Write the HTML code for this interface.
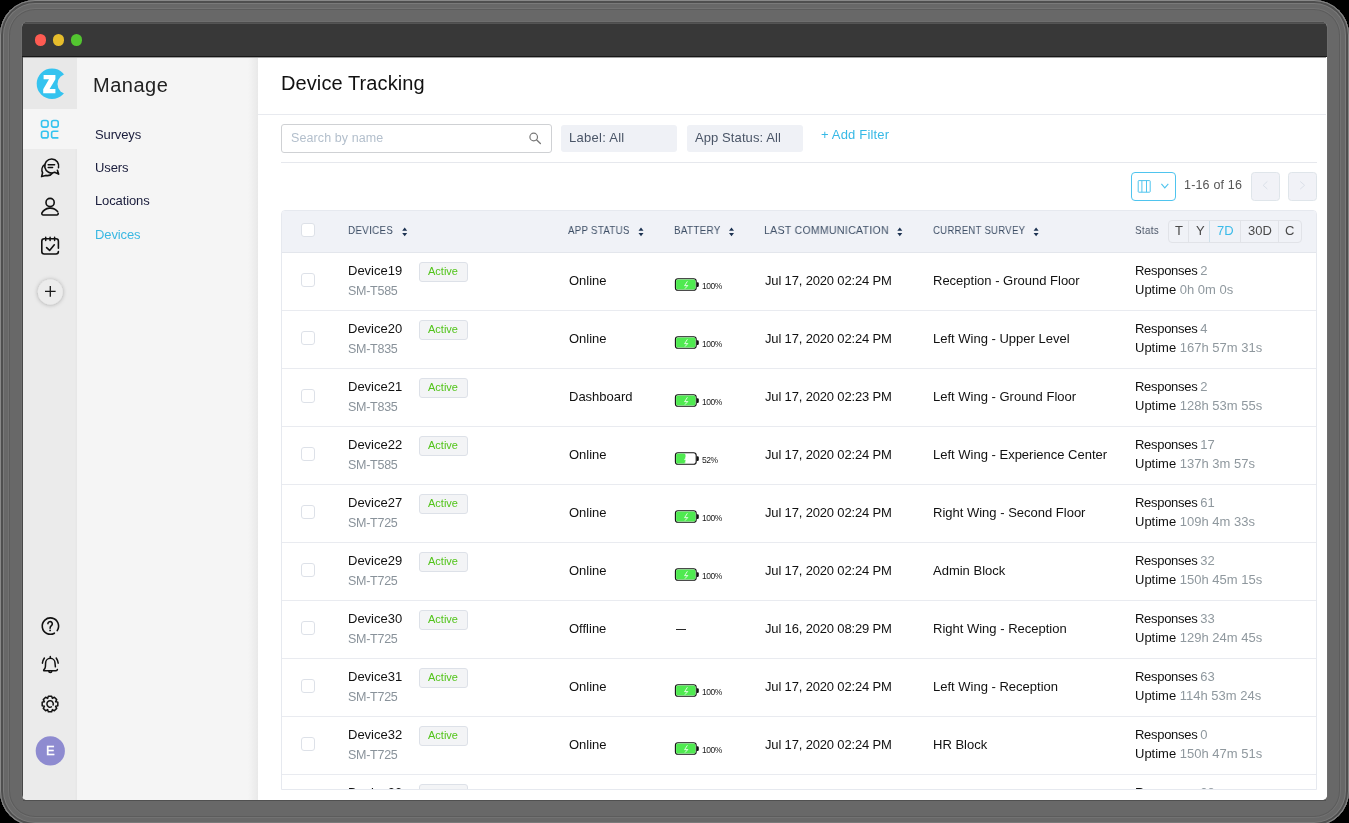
<!DOCTYPE html>
<html><head><meta charset="utf-8"><style>
*{box-sizing:border-box;margin:0;padding:0}
html,body{width:1349px;height:823px;overflow:hidden;background:#000;font-family:"Liberation Sans",sans-serif}
#frame{position:absolute;left:0;top:0;width:1349px;height:826px;background:#686868;border-radius:35px;box-shadow:inset 0 0 0 1px #888,inset 0 0 0 3px #4f4f4f,inset 0 0 0 4px #7a7a7a,inset 0 0 0 8px #686868,inset 0 0 0 9px #727272,inset 0 0 0 10px #5c5c5c}
#win{position:absolute;left:22px;top:22px;width:1305px;height:778px;border-radius:5px;overflow:hidden;background:#fff;box-shadow:0 0 0 1px #6e6e6e}
#title{position:absolute;left:0;top:0;width:1305px;height:35px;background:#383838;border-top:1px solid #4d4d4d;border-bottom:1px solid #171717;box-shadow:inset 0 1px 0 #545454}
.dot{position:absolute;top:11.45px;width:11.5px;height:11.5px;border-radius:50%}
#rail{position:absolute;left:0;top:35px;width:55px;height:743px;background:#ebebeb;border-left:1px solid #474747}
#side{position:absolute;left:55px;top:35px;width:181px;height:743px;background:#f5f5f5}
#main{position:absolute;left:236px;top:35px;width:1069px;height:743px;background:#fff}
.t{position:absolute;white-space:nowrap;line-height:1;will-change:transform}
.a{position:absolute}
svg{position:absolute;left:0;top:0;overflow:visible}
#clip{position:absolute;left:0;top:0;width:1349px;height:789px;overflow:hidden}
</style></head><body>
<div id="frame"></div>
<div id="win">
<div id="title">
<div class="dot" style="left:12.6px;background:#fe5b52"></div>
<div class="dot" style="left:30.6px;background:#e6bd2c"></div>
<div class="dot" style="left:48.6px;background:#53c530"></div>
</div>
<div id="rail"></div><div id="side"></div><div id="main"></div>
</div>
<div class="a" style="left:23px;top:57px;width:1303px;height:1px;background:#a0a0a0"></div>
<div class="a" style="left:23px;top:800px;width:1303px;height:1px;background:#505050"></div>
<div class="a" style="left:23px;top:58px;width:54px;height:51px;background:#e8e8e8"></div>
<div class="a" style="left:23px;top:109px;width:54px;height:40px;background:#f5f5f5"></div>
<div class="a" style="left:75px;top:149px;width:2px;height:651px;background:linear-gradient(to right,#eaeaea,#e6e6e6)"></div>
<div class="a" style="left:248px;top:58px;width:10px;height:742px;background:linear-gradient(to right,rgba(0,0,0,0),rgba(0,0,0,0.05))"></div>
<div class="t" style="left:92.9px;top:75.47px;font-size:20px;color:#222;letter-spacing:0.5px">Manage</div>
<div class="t" style="left:95.4px;top:127.70px;font-size:13px;color:#1a1d3c;letter-spacing:-0.12px">Surveys</div>
<div class="t" style="left:95.4px;top:161.00px;font-size:13px;color:#1a1d3c;letter-spacing:-0.12px">Users</div>
<div class="t" style="left:95.4px;top:194.40px;font-size:13px;color:#1a1d3c;letter-spacing:-0.12px">Locations</div>
<div class="t" style="left:95.4px;top:227.80px;font-size:13px;color:#3bb8e2;letter-spacing:-0.12px">Devices</div>
<div class="t" style="left:281px;top:73.47px;font-size:20px;color:#111;letter-spacing:0.1px">Device Tracking</div>
<div class="a" style="left:258px;top:114px;width:1068px;height:1px;background:#e8eaef"></div>
<div class="a" style="left:281px;top:124px;width:271px;height:29px;border:1px solid #cfd1d4;border-radius:3px;background:#fff"></div>
<div class="t" style="left:291.4px;top:131.82px;font-size:12.5px;color:#b3bfcc;letter-spacing:0.1px">Search by name</div>
<div class="a" style="left:561px;top:125px;width:116px;height:27px;border-radius:3px;background:#eff1f6"></div>
<div class="t" style="left:568.6px;top:131.20px;font-size:13px;color:#4a5567;letter-spacing:0.27px">Label: All</div>
<div class="a" style="left:687px;top:125px;width:116px;height:27px;border-radius:3px;background:#eff1f6"></div>
<div class="t" style="left:695px;top:131.20px;font-size:13px;color:#4a5567;letter-spacing:0.09px">App Status: All</div>
<div class="t" style="left:821px;top:127.90px;font-size:13px;color:#37b9e6;letter-spacing:0.18px">+ Add Filter</div>
<div class="a" style="left:281px;top:162px;width:1036px;height:1px;background:#e6e8ed"></div>
<div class="a" style="left:1130.5px;top:172px;width:45.5px;height:29px;border:1px solid #4fc4ee;border-radius:4px"></div>
<div class="t" style="left:1184.2px;top:178.72px;font-size:12.5px;color:#555;letter-spacing:0.18px">1-16 of 16</div>
<div class="a" style="left:1251px;top:172px;width:29px;height:29px;border:1px solid #dfe5ea;border-radius:3.5px;background:#f1f2f7"></div>
<div class="a" style="left:1288px;top:172px;width:29px;height:29px;border:1px solid #dfe5ea;border-radius:3.5px;background:#f1f2f7"></div>
<div class="a" style="left:281px;top:210px;width:1036px;height:580px;border:1px solid #e6e9ef;border-radius:4px 4px 0 0;overflow:hidden;background:#fff">
<div class="a" style="left:0;top:0;width:1036px;height:42px;background:#f0f2f7;border-bottom:1px solid #e3e6ec"></div>
</div>
<div class="a" style="left:301px;top:222.5px;width:14px;height:14px;border:1px solid #dde1e8;border-radius:3px;background:#fff"></div>
<div class="t" style="left:348.154px;top:224.38px;font-size:11.6px;color:#3e4f66;letter-spacing:0.35px;transform:scaleX(0.846);transform-origin:0 0">DEVICES</div>
<div class="t" style="left:567.764px;top:224.38px;font-size:11.6px;color:#3e4f66;letter-spacing:0.35px;transform:scaleX(0.836);transform-origin:0 0">APP STATUS</div>
<div class="t" style="left:673.949px;top:224.38px;font-size:11.6px;color:#3e4f66;letter-spacing:0.35px;transform:scaleX(0.851);transform-origin:0 0">BATTERY</div>
<div class="t" style="left:764.494px;top:224.38px;font-size:11.6px;color:#3e4f66;letter-spacing:0.35px;transform:scaleX(0.906);transform-origin:0 0">LAST COMMUNICATION</div>
<div class="t" style="left:932.977px;top:224.38px;font-size:11.6px;color:#3e4f66;letter-spacing:0.35px;transform:scaleX(0.823);transform-origin:0 0">CURRENT SURVEY</div>
<div class="t" style="left:1135.3px;top:224.38px;font-size:11.6px;color:#4a5567;letter-spacing:0.35px;transform:scaleX(0.852);transform-origin:0 0">Stats</div>
<div class="a" style="left:1167.5px;top:220px;width:134px;height:23px;border:1px solid #e1e3e8;border-radius:4px;background:#f0f2f7"></div>
<div class="a" style="left:1188.2px;top:221px;width:1px;height:21px;background:#e1e3e8"></div>
<div class="a" style="left:1209.0px;top:221px;width:1px;height:21px;background:#cfe0ea"></div>
<div class="a" style="left:1240.1px;top:221px;width:1px;height:21px;background:#e1e3e8"></div>
<div class="a" style="left:1277.9px;top:221px;width:1px;height:21px;background:#e1e3e8"></div>
<div class="t" style="left:1175px;top:223.60px;font-size:13px;color:#4a4a4a;">T</div>
<div class="t" style="left:1196.1px;top:223.60px;font-size:13px;color:#4a4a4a;">Y</div>
<div class="t" style="left:1217.3px;top:223.60px;font-size:13px;color:#3bbbe9;">7D</div>
<div class="t" style="left:1247.8px;top:223.60px;font-size:13px;color:#4a4a4a;">30D</div>
<div class="t" style="left:1285.1px;top:223.60px;font-size:13px;color:#4a4a4a;">C</div>
<div id="clip">
<div class="a" style="left:282px;top:310px;width:1034px;height:1px;background:#e9ebf0"></div>
<div class="a" style="left:301px;top:273.2px;width:14px;height:14px;border:1px solid #dde1e8;border-radius:3px;background:#fff"></div>
<div class="t" style="left:348.3px;top:264.00px;font-size:13px;color:#111;">Device19</div>
<div class="t" style="left:348.3px;top:284.82px;font-size:12.5px;color:#89929a;letter-spacing:-0.27px">SM-T585</div>
<div class="a" style="left:419px;top:262.4px;width:49px;height:20px;border:1px solid #dde1e8;border-radius:3px;background:#f3f4f6"></div>
<div class="t" style="left:428.3px;top:265.69px;font-size:11px;color:#52c41a;">Active</div>
<div class="t" style="left:569px;top:274.00px;font-size:13px;color:#111;">Online</div>
<div class="t" style="left:701.9px;top:282.00px;font-size:8.5px;color:#222;letter-spacing:-0.45px">100%</div>
<div class="t" style="left:765.3px;top:274.00px;font-size:13px;color:#111;letter-spacing:-0.16px">Jul 17, 2020 02:24 PM</div>
<div class="t" style="left:932.9px;top:274.00px;font-size:13px;color:#111;">Reception - Ground Floor</div>
<div class="t" style="left:1134.6px;top:264.00px;font-size:13px;color:#111;"><span style="letter-spacing:-0.3px">Responses</span> <span style="color:#8f989e;margin-left:-0.8px">2</span></div>
<div class="t" style="left:1134.6px;top:282.80px;font-size:13px;color:#111;">Uptime <span style="color:#8f989e">0h 0m 0s</span></div>
<div class="a" style="left:282px;top:368px;width:1034px;height:1px;background:#e9ebf0"></div>
<div class="a" style="left:301px;top:331.2px;width:14px;height:14px;border:1px solid #dde1e8;border-radius:3px;background:#fff"></div>
<div class="t" style="left:348.3px;top:322.00px;font-size:13px;color:#111;">Device20</div>
<div class="t" style="left:348.3px;top:342.82px;font-size:12.5px;color:#89929a;letter-spacing:-0.27px">SM-T835</div>
<div class="a" style="left:419px;top:320.4px;width:49px;height:20px;border:1px solid #dde1e8;border-radius:3px;background:#f3f4f6"></div>
<div class="t" style="left:428.3px;top:323.69px;font-size:11px;color:#52c41a;">Active</div>
<div class="t" style="left:569px;top:332.00px;font-size:13px;color:#111;">Online</div>
<div class="t" style="left:701.9px;top:340.00px;font-size:8.5px;color:#222;letter-spacing:-0.45px">100%</div>
<div class="t" style="left:765.3px;top:332.00px;font-size:13px;color:#111;letter-spacing:-0.16px">Jul 17, 2020 02:24 PM</div>
<div class="t" style="left:932.9px;top:332.00px;font-size:13px;color:#111;">Left Wing - Upper Level</div>
<div class="t" style="left:1134.6px;top:322.00px;font-size:13px;color:#111;"><span style="letter-spacing:-0.3px">Responses</span> <span style="color:#8f989e;margin-left:-0.8px">4</span></div>
<div class="t" style="left:1134.6px;top:340.80px;font-size:13px;color:#111;">Uptime <span style="color:#8f989e">167h 57m 31s</span></div>
<div class="a" style="left:282px;top:426px;width:1034px;height:1px;background:#e9ebf0"></div>
<div class="a" style="left:301px;top:389.2px;width:14px;height:14px;border:1px solid #dde1e8;border-radius:3px;background:#fff"></div>
<div class="t" style="left:348.3px;top:380.00px;font-size:13px;color:#111;">Device21</div>
<div class="t" style="left:348.3px;top:400.82px;font-size:12.5px;color:#89929a;letter-spacing:-0.27px">SM-T835</div>
<div class="a" style="left:419px;top:378.4px;width:49px;height:20px;border:1px solid #dde1e8;border-radius:3px;background:#f3f4f6"></div>
<div class="t" style="left:428.3px;top:381.69px;font-size:11px;color:#52c41a;">Active</div>
<div class="t" style="left:569px;top:390.00px;font-size:13px;color:#111;">Dashboard</div>
<div class="t" style="left:701.9px;top:398.00px;font-size:8.5px;color:#222;letter-spacing:-0.45px">100%</div>
<div class="t" style="left:765.3px;top:390.00px;font-size:13px;color:#111;letter-spacing:-0.16px">Jul 17, 2020 02:23 PM</div>
<div class="t" style="left:932.9px;top:390.00px;font-size:13px;color:#111;">Left Wing - Ground Floor</div>
<div class="t" style="left:1134.6px;top:380.00px;font-size:13px;color:#111;"><span style="letter-spacing:-0.3px">Responses</span> <span style="color:#8f989e;margin-left:-0.8px">2</span></div>
<div class="t" style="left:1134.6px;top:398.80px;font-size:13px;color:#111;">Uptime <span style="color:#8f989e">128h 53m 55s</span></div>
<div class="a" style="left:282px;top:484px;width:1034px;height:1px;background:#e9ebf0"></div>
<div class="a" style="left:301px;top:447.2px;width:14px;height:14px;border:1px solid #dde1e8;border-radius:3px;background:#fff"></div>
<div class="t" style="left:348.3px;top:438.00px;font-size:13px;color:#111;">Device22</div>
<div class="t" style="left:348.3px;top:458.82px;font-size:12.5px;color:#89929a;letter-spacing:-0.27px">SM-T585</div>
<div class="a" style="left:419px;top:436.4px;width:49px;height:20px;border:1px solid #dde1e8;border-radius:3px;background:#f3f4f6"></div>
<div class="t" style="left:428.3px;top:439.69px;font-size:11px;color:#52c41a;">Active</div>
<div class="t" style="left:569px;top:448.00px;font-size:13px;color:#111;">Online</div>
<div class="t" style="left:701.9px;top:456.00px;font-size:8.5px;color:#222;letter-spacing:-0.45px">52%</div>
<div class="t" style="left:765.3px;top:448.00px;font-size:13px;color:#111;letter-spacing:-0.16px">Jul 17, 2020 02:24 PM</div>
<div class="t" style="left:932.9px;top:448.00px;font-size:13px;color:#111;">Left Wing - Experience Center</div>
<div class="t" style="left:1134.6px;top:438.00px;font-size:13px;color:#111;"><span style="letter-spacing:-0.3px">Responses</span> <span style="color:#8f989e;margin-left:-0.8px">17</span></div>
<div class="t" style="left:1134.6px;top:456.80px;font-size:13px;color:#111;">Uptime <span style="color:#8f989e">137h 3m 57s</span></div>
<div class="a" style="left:282px;top:542px;width:1034px;height:1px;background:#e9ebf0"></div>
<div class="a" style="left:301px;top:505.2px;width:14px;height:14px;border:1px solid #dde1e8;border-radius:3px;background:#fff"></div>
<div class="t" style="left:348.3px;top:496.00px;font-size:13px;color:#111;">Device27</div>
<div class="t" style="left:348.3px;top:516.82px;font-size:12.5px;color:#89929a;letter-spacing:-0.27px">SM-T725</div>
<div class="a" style="left:419px;top:494.4px;width:49px;height:20px;border:1px solid #dde1e8;border-radius:3px;background:#f3f4f6"></div>
<div class="t" style="left:428.3px;top:497.69px;font-size:11px;color:#52c41a;">Active</div>
<div class="t" style="left:569px;top:506.00px;font-size:13px;color:#111;">Online</div>
<div class="t" style="left:701.9px;top:514.00px;font-size:8.5px;color:#222;letter-spacing:-0.45px">100%</div>
<div class="t" style="left:765.3px;top:506.00px;font-size:13px;color:#111;letter-spacing:-0.16px">Jul 17, 2020 02:24 PM</div>
<div class="t" style="left:932.9px;top:506.00px;font-size:13px;color:#111;">Right Wing - Second Floor</div>
<div class="t" style="left:1134.6px;top:496.00px;font-size:13px;color:#111;"><span style="letter-spacing:-0.3px">Responses</span> <span style="color:#8f989e;margin-left:-0.8px">61</span></div>
<div class="t" style="left:1134.6px;top:514.80px;font-size:13px;color:#111;">Uptime <span style="color:#8f989e">109h 4m 33s</span></div>
<div class="a" style="left:282px;top:600px;width:1034px;height:1px;background:#e9ebf0"></div>
<div class="a" style="left:301px;top:563.2px;width:14px;height:14px;border:1px solid #dde1e8;border-radius:3px;background:#fff"></div>
<div class="t" style="left:348.3px;top:554.00px;font-size:13px;color:#111;">Device29</div>
<div class="t" style="left:348.3px;top:574.82px;font-size:12.5px;color:#89929a;letter-spacing:-0.27px">SM-T725</div>
<div class="a" style="left:419px;top:552.4px;width:49px;height:20px;border:1px solid #dde1e8;border-radius:3px;background:#f3f4f6"></div>
<div class="t" style="left:428.3px;top:555.69px;font-size:11px;color:#52c41a;">Active</div>
<div class="t" style="left:569px;top:564.00px;font-size:13px;color:#111;">Online</div>
<div class="t" style="left:701.9px;top:572.00px;font-size:8.5px;color:#222;letter-spacing:-0.45px">100%</div>
<div class="t" style="left:765.3px;top:564.00px;font-size:13px;color:#111;letter-spacing:-0.16px">Jul 17, 2020 02:24 PM</div>
<div class="t" style="left:932.9px;top:564.00px;font-size:13px;color:#111;">Admin Block</div>
<div class="t" style="left:1134.6px;top:554.00px;font-size:13px;color:#111;"><span style="letter-spacing:-0.3px">Responses</span> <span style="color:#8f989e;margin-left:-0.8px">32</span></div>
<div class="t" style="left:1134.6px;top:572.80px;font-size:13px;color:#111;">Uptime <span style="color:#8f989e">150h 45m 15s</span></div>
<div class="a" style="left:282px;top:658px;width:1034px;height:1px;background:#e9ebf0"></div>
<div class="a" style="left:301px;top:621.2px;width:14px;height:14px;border:1px solid #dde1e8;border-radius:3px;background:#fff"></div>
<div class="t" style="left:348.3px;top:612.00px;font-size:13px;color:#111;">Device30</div>
<div class="t" style="left:348.3px;top:632.82px;font-size:12.5px;color:#89929a;letter-spacing:-0.27px">SM-T725</div>
<div class="a" style="left:419px;top:610.4px;width:49px;height:20px;border:1px solid #dde1e8;border-radius:3px;background:#f3f4f6"></div>
<div class="t" style="left:428.3px;top:613.69px;font-size:11px;color:#52c41a;">Active</div>
<div class="t" style="left:569px;top:622.00px;font-size:13px;color:#111;">Offline</div>
<div class="a" style="left:676.4px;top:628.6px;width:9.4px;height:1.1px;background:#2a2a2a"></div>
<div class="t" style="left:765.3px;top:622.00px;font-size:13px;color:#111;letter-spacing:-0.16px">Jul 16, 2020 08:29 PM</div>
<div class="t" style="left:932.9px;top:622.00px;font-size:13px;color:#111;">Right Wing - Reception</div>
<div class="t" style="left:1134.6px;top:612.00px;font-size:13px;color:#111;"><span style="letter-spacing:-0.3px">Responses</span> <span style="color:#8f989e;margin-left:-0.8px">33</span></div>
<div class="t" style="left:1134.6px;top:630.80px;font-size:13px;color:#111;">Uptime <span style="color:#8f989e">129h 24m 45s</span></div>
<div class="a" style="left:282px;top:716px;width:1034px;height:1px;background:#e9ebf0"></div>
<div class="a" style="left:301px;top:679.2px;width:14px;height:14px;border:1px solid #dde1e8;border-radius:3px;background:#fff"></div>
<div class="t" style="left:348.3px;top:670.00px;font-size:13px;color:#111;">Device31</div>
<div class="t" style="left:348.3px;top:690.82px;font-size:12.5px;color:#89929a;letter-spacing:-0.27px">SM-T725</div>
<div class="a" style="left:419px;top:668.4px;width:49px;height:20px;border:1px solid #dde1e8;border-radius:3px;background:#f3f4f6"></div>
<div class="t" style="left:428.3px;top:671.69px;font-size:11px;color:#52c41a;">Active</div>
<div class="t" style="left:569px;top:680.00px;font-size:13px;color:#111;">Online</div>
<div class="t" style="left:701.9px;top:688.00px;font-size:8.5px;color:#222;letter-spacing:-0.45px">100%</div>
<div class="t" style="left:765.3px;top:680.00px;font-size:13px;color:#111;letter-spacing:-0.16px">Jul 17, 2020 02:24 PM</div>
<div class="t" style="left:932.9px;top:680.00px;font-size:13px;color:#111;">Left Wing - Reception</div>
<div class="t" style="left:1134.6px;top:670.00px;font-size:13px;color:#111;"><span style="letter-spacing:-0.3px">Responses</span> <span style="color:#8f989e;margin-left:-0.8px">63</span></div>
<div class="t" style="left:1134.6px;top:688.80px;font-size:13px;color:#111;">Uptime <span style="color:#8f989e">114h 53m 24s</span></div>
<div class="a" style="left:282px;top:774px;width:1034px;height:1px;background:#e9ebf0"></div>
<div class="a" style="left:301px;top:737.2px;width:14px;height:14px;border:1px solid #dde1e8;border-radius:3px;background:#fff"></div>
<div class="t" style="left:348.3px;top:728.00px;font-size:13px;color:#111;">Device32</div>
<div class="t" style="left:348.3px;top:748.82px;font-size:12.5px;color:#89929a;letter-spacing:-0.27px">SM-T725</div>
<div class="a" style="left:419px;top:726.4px;width:49px;height:20px;border:1px solid #dde1e8;border-radius:3px;background:#f3f4f6"></div>
<div class="t" style="left:428.3px;top:729.69px;font-size:11px;color:#52c41a;">Active</div>
<div class="t" style="left:569px;top:738.00px;font-size:13px;color:#111;">Online</div>
<div class="t" style="left:701.9px;top:746.00px;font-size:8.5px;color:#222;letter-spacing:-0.45px">100%</div>
<div class="t" style="left:765.3px;top:738.00px;font-size:13px;color:#111;letter-spacing:-0.16px">Jul 17, 2020 02:24 PM</div>
<div class="t" style="left:932.9px;top:738.00px;font-size:13px;color:#111;">HR Block</div>
<div class="t" style="left:1134.6px;top:728.00px;font-size:13px;color:#111;"><span style="letter-spacing:-0.3px">Responses</span> <span style="color:#8f989e;margin-left:-0.8px">0</span></div>
<div class="t" style="left:1134.6px;top:746.80px;font-size:13px;color:#111;">Uptime <span style="color:#8f989e">150h 47m 51s</span></div>
<div class="a" style="left:282px;top:832px;width:1034px;height:1px;background:#e9ebf0"></div>
<div class="a" style="left:301px;top:795.2px;width:14px;height:14px;border:1px solid #dde1e8;border-radius:3px;background:#fff"></div>
<div class="t" style="left:348.3px;top:786.00px;font-size:13px;color:#111;">Device33</div>
<div class="t" style="left:348.3px;top:806.82px;font-size:12.5px;color:#89929a;letter-spacing:-0.27px">SM-T725</div>
<div class="a" style="left:419px;top:784.4px;width:49px;height:20px;border:1px solid #dde1e8;border-radius:3px;background:#f3f4f6"></div>
<div class="t" style="left:428.3px;top:787.69px;font-size:11px;color:#52c41a;">Active</div>
<div class="t" style="left:569px;top:796.00px;font-size:13px;color:#111;">Online</div>
<div class="t" style="left:701.9px;top:804.00px;font-size:8.5px;color:#222;letter-spacing:-0.45px">100%</div>
<div class="t" style="left:765.3px;top:796.00px;font-size:13px;color:#111;letter-spacing:-0.16px">Jul 17, 2020 02:24 PM</div>
<div class="t" style="left:932.9px;top:796.00px;font-size:13px;color:#111;">Left Wing - Reception</div>
<div class="t" style="left:1134.6px;top:786.00px;font-size:13px;color:#111;"><span style="letter-spacing:-0.3px">Responses</span> <span style="color:#8f989e;margin-left:-0.8px">28</span></div>
<div class="t" style="left:1134.6px;top:804.80px;font-size:13px;color:#111;">Uptime <span style="color:#8f989e">150h 47m 51s</span></div>
<svg width="1349" height="823"><rect x="675.4" y="278.8" width="20.8" height="11.5" rx="2.6" fill="#fff" stroke="#111" stroke-width="1.1"/><rect x="676.1" y="279.5" width="19.40" height="10.1" rx="1.6" fill="#4fea50"/><path d="M696.6,282.2 h0.9 a1.3,1.3 0 0 1 1.3,1.3 v2.3 a1.3,1.3 0 0 1 -1.3,1.3 h-0.9z" fill="#111"/><path d="M687.4,281.3 L684.6,285.7 L687.8,285.5 L685,288.6" fill="none" stroke="#fff" stroke-width="0.9" stroke-linejoin="round" opacity="0.9"/><rect x="675.4" y="336.8" width="20.8" height="11.5" rx="2.6" fill="#fff" stroke="#111" stroke-width="1.1"/><rect x="676.1" y="337.5" width="19.40" height="10.1" rx="1.6" fill="#4fea50"/><path d="M696.6,340.2 h0.9 a1.3,1.3 0 0 1 1.3,1.3 v2.3 a1.3,1.3 0 0 1 -1.3,1.3 h-0.9z" fill="#111"/><path d="M687.4,339.3 L684.6,343.7 L687.8,343.5 L685,346.6" fill="none" stroke="#fff" stroke-width="0.9" stroke-linejoin="round" opacity="0.9"/><rect x="675.4" y="394.8" width="20.8" height="11.5" rx="2.6" fill="#fff" stroke="#111" stroke-width="1.1"/><rect x="676.1" y="395.5" width="19.40" height="10.1" rx="1.6" fill="#4fea50"/><path d="M696.6,398.2 h0.9 a1.3,1.3 0 0 1 1.3,1.3 v2.3 a1.3,1.3 0 0 1 -1.3,1.3 h-0.9z" fill="#111"/><path d="M687.4,397.3 L684.6,401.7 L687.8,401.5 L685,404.6" fill="none" stroke="#fff" stroke-width="0.9" stroke-linejoin="round" opacity="0.9"/><rect x="675.4" y="452.8" width="20.8" height="11.5" rx="2.6" fill="#fff" stroke="#111" stroke-width="1.1"/><rect x="676.1" y="453.5" width="9.42" height="10.1" rx="1.6" fill="#4fea50"/><path d="M696.6,456.2 h0.9 a1.3,1.3 0 0 1 1.3,1.3 v2.3 a1.3,1.3 0 0 1 -1.3,1.3 h-0.9z" fill="#111"/><path d="M687.4,455.3 L684.6,459.7 L687.8,459.5 L685,462.6" fill="none" stroke="#fff" stroke-width="0.9" stroke-linejoin="round" opacity="0.9"/><rect x="675.4" y="510.8" width="20.8" height="11.5" rx="2.6" fill="#fff" stroke="#111" stroke-width="1.1"/><rect x="676.1" y="511.5" width="19.40" height="10.1" rx="1.6" fill="#4fea50"/><path d="M696.6,514.2 h0.9 a1.3,1.3 0 0 1 1.3,1.3 v2.3 a1.3,1.3 0 0 1 -1.3,1.3 h-0.9z" fill="#111"/><path d="M687.4,513.3 L684.6,517.7 L687.8,517.5 L685,520.6" fill="none" stroke="#fff" stroke-width="0.9" stroke-linejoin="round" opacity="0.9"/><rect x="675.4" y="568.8" width="20.8" height="11.5" rx="2.6" fill="#fff" stroke="#111" stroke-width="1.1"/><rect x="676.1" y="569.5" width="19.40" height="10.1" rx="1.6" fill="#4fea50"/><path d="M696.6,572.1999999999999 h0.9 a1.3,1.3 0 0 1 1.3,1.3 v2.3 a1.3,1.3 0 0 1 -1.3,1.3 h-0.9z" fill="#111"/><path d="M687.4,571.3 L684.6,575.6999999999999 L687.8,575.5 L685,578.5999999999999" fill="none" stroke="#fff" stroke-width="0.9" stroke-linejoin="round" opacity="0.9"/><rect x="675.4" y="684.8" width="20.8" height="11.5" rx="2.6" fill="#fff" stroke="#111" stroke-width="1.1"/><rect x="676.1" y="685.5" width="19.40" height="10.1" rx="1.6" fill="#4fea50"/><path d="M696.6,688.1999999999999 h0.9 a1.3,1.3 0 0 1 1.3,1.3 v2.3 a1.3,1.3 0 0 1 -1.3,1.3 h-0.9z" fill="#111"/><path d="M687.4,687.3 L684.6,691.6999999999999 L687.8,691.5 L685,694.5999999999999" fill="none" stroke="#fff" stroke-width="0.9" stroke-linejoin="round" opacity="0.9"/><rect x="675.4" y="742.8" width="20.8" height="11.5" rx="2.6" fill="#fff" stroke="#111" stroke-width="1.1"/><rect x="676.1" y="743.5" width="19.40" height="10.1" rx="1.6" fill="#4fea50"/><path d="M696.6,746.1999999999999 h0.9 a1.3,1.3 0 0 1 1.3,1.3 v2.3 a1.3,1.3 0 0 1 -1.3,1.3 h-0.9z" fill="#111"/><path d="M687.4,745.3 L684.6,749.6999999999999 L687.8,749.5 L685,752.5999999999999" fill="none" stroke="#fff" stroke-width="0.9" stroke-linejoin="round" opacity="0.9"/><rect x="675.4" y="800.8" width="20.8" height="11.5" rx="2.6" fill="#fff" stroke="#111" stroke-width="1.1"/><rect x="676.1" y="801.5" width="19.40" height="10.1" rx="1.6" fill="#4fea50"/><path d="M696.6,804.1999999999999 h0.9 a1.3,1.3 0 0 1 1.3,1.3 v2.3 a1.3,1.3 0 0 1 -1.3,1.3 h-0.9z" fill="#111"/><path d="M687.4,803.3 L684.6,807.6999999999999 L687.8,807.5 L685,810.5999999999999" fill="none" stroke="#fff" stroke-width="0.9" stroke-linejoin="round" opacity="0.9"/></svg></div>
<svg width="1349" height="823"><defs><mask id="bite"><rect x="30" y="60" width="50" height="50" fill="#fff"/><circle cx="67.7" cy="84" r="10.2" fill="#000"/></mask></defs><circle cx="52" cy="83.7" r="15.3" fill="#35c3ef" mask="url(#bite)"/><path d="M43.6,75 H55.4 V79.2 L49.6,89 H55.4 V93.2 H43.2 V89.2 L49,79.2 H43.6 Z" fill="#fff"/><rect x="41.5" y="120.5" width="6.6" height="6.6" rx="2" fill="none" stroke="#35c3ef" stroke-width="1.6"/><rect x="51.6" y="120.5" width="6.6" height="6.6" rx="2" fill="none" stroke="#35c3ef" stroke-width="1.6"/><rect x="41.5" y="131.3" width="6.6" height="6.6" rx="2" fill="none" stroke="#35c3ef" stroke-width="1.6"/><path d="M58.4,131.3 H53.6 a2,2 0 0 0 -2,2 V135.9 a2,2 0 0 0 2,2 H58.4" fill="none" stroke="#35c3ef" stroke-width="1.6"/><path d="M58.5,167.6 A7,7 0 1 0 54.6,172.3 L58.6,174.1 L57.4,170.2" fill="none" stroke="#111" stroke-width="1.6" stroke-linejoin="round" stroke-linecap="round"/><path d="M44.6,164.6 A6.6,6.6 0 0 0 42.6,172.8 L41.6,176.6 L45.8,175.4 A6.6,6.6 0 0 0 52.6,172.9" fill="none" stroke="#111" stroke-width="1.6" stroke-linejoin="round"/><path d="M48.2,164.8 H54.6 M48.2,167.6 H52.6" stroke="#111" stroke-width="1.5" stroke-linecap="round"/><circle cx="50.1" cy="202.5" r="4.1" fill="none" stroke="#111" stroke-width="1.6"/><path d="M57.6,211.6 A9.5,9.5 0 0 0 41.8,213.2 A1.6,1.6 0 0 0 43.2,215 H56.8 A1.6,1.6 0 0 0 58.2,213.2" fill="none" stroke="#111" stroke-width="1.6" stroke-linecap="round"/><path d="M58.4,248.2 V241.2 A2.4,2.4 0 0 0 56,238.8 H44.2 A2.4,2.4 0 0 0 41.8,241.2 V251.6 A2.4,2.4 0 0 0 44.2,254 H56 A2.4,2.4 0 0 0 58.4,251.6" fill="none" stroke="#111" stroke-width="1.6" stroke-linecap="round"/><path d="M45.7,237.2 V240.6 M50.1,237.2 V240.6 M54.6,237.2 V240.6" stroke="#111" stroke-width="1.5" stroke-linecap="round"/><path d="M46.6,247.6 L49.6,250.4 L54.3,244.8" fill="none" stroke="#111" stroke-width="1.6" stroke-linecap="round" stroke-linejoin="round"/><defs><filter id="sh" x="-50%" y="-50%" width="200%" height="200%"><feDropShadow dx="0" dy="0.3" stdDeviation="2" flood-color="#000" flood-opacity="0.3"/></filter></defs><circle cx="50.3" cy="292" r="12.4" fill="#ececec" filter="url(#sh)"/><path d="M45,291.4 H55.6 M50.3,286 V296.7" stroke="#1a1a1a" stroke-width="1.3"/><path d="M57.2,630.6 A8.15,8.15 0 1 0 54.4,633.2" fill="none" stroke="#111" stroke-width="1.6" stroke-linecap="round"/><path d="M47.9,623.6 A2.2,2.2 0 1 1 51.6,625.4 C50.4,626.2 50.1,626.8 50.1,628.2" fill="none" stroke="#111" stroke-width="1.6" stroke-linecap="round"/><circle cx="50.1" cy="630.4" r="0.9" fill="#111"/><path d="M55.4,666.8 L55,663 A4.7,4.7 0 0 0 45.6,663 L45.4,666.6 Q45.2,668.6 43.9,669.6 Q43.1,670.8 44.6,670.8 H56 Q57.2,670.8 57.4,669.4" fill="none" stroke="#111" stroke-width="1.5" stroke-linecap="round" stroke-linejoin="round"/><path d="M50.3,656.6 V658.2 M48.8,671 A1.5,1.5 0 0 0 51.8,671" fill="none" stroke="#111" stroke-width="1.5" stroke-linecap="round"/><path d="M44.4,658 Q42.8,660.2 42.4,663.2 M56.2,658 Q57.8,660.2 58.2,663.2" fill="none" stroke="#111" stroke-width="1.5" stroke-linecap="round"/><path d="M47.62,698.38 L48.33,696.18 L51.67,696.18 L52.38,698.38 L52.29,698.35 L54.35,697.29 L56.71,699.65 L55.65,701.71 L55.62,701.62 L57.82,702.33 L57.82,705.67 L55.62,706.38 L55.65,706.29 L56.71,708.35 L54.35,710.71 L52.29,709.65 L52.38,709.62 L51.67,711.82 L48.33,711.82 L47.62,709.62 L47.71,709.65 L45.65,710.71 L43.29,708.35 L44.35,706.29 L44.38,706.38 L42.18,705.67 L42.18,702.33 L44.38,701.62 L44.35,701.71 L43.29,699.65 L45.65,697.29 L47.71,698.35Z" fill="none" stroke="#111" stroke-width="1.5" stroke-linejoin="round"/><path d="M53.1,705.1 A3.2,3.2 0 1 0 51.4,706.9" fill="none" stroke="#111" stroke-width="1.5" stroke-linecap="round"/><circle cx="50.3" cy="750.9" r="14.6" fill="#8e8bd0"/><circle cx="533.7" cy="137" r="3.8" fill="none" stroke="#777" stroke-width="1.2"/><path d="M536.5,139.8 L540.4,143.5" stroke="#777" stroke-width="1.3" stroke-linecap="round"/><rect x="1138.2" y="180.6" width="12" height="11.6" rx="0.6" fill="none" stroke="#4fc4ee" stroke-width="1"/><path d="M1141.9,180.6 V192.2 M1146.5,180.6 V192.2" stroke="#4fc4ee" stroke-width="1"/><path d="M1161.4,183.8 L1164.8,187.8 L1168.3,183.8" fill="none" stroke="#4fc4ee" stroke-width="1.1"/><path d="M1267.4,181.4 L1263.2,185.3 L1267.4,189.1" fill="none" stroke="#d8dee6" stroke-width="0.9"/><path d="M1300.2,181.4 L1304.6,185.3 L1300.2,189.1" fill="none" stroke="#d8dee6" stroke-width="0.9"/><path d="M402.2,230.8 L404.7,227.6 L407.2,230.8 Z M402.2,233 L404.7,236.2 L407.2,233 Z" fill="#1d3352"/><path d="M638.5,230.8 L641.0,227.6 L643.5,230.8 Z M638.5,233 L641.0,236.2 L643.5,233 Z" fill="#1d3352"/><path d="M729,230.8 L731.5,227.6 L734,230.8 Z M729,233 L731.5,236.2 L734,233 Z" fill="#1d3352"/><path d="M897.3,230.8 L899.8,227.6 L902.3,230.8 Z M897.3,233 L899.8,236.2 L902.3,233 Z" fill="#1d3352"/><path d="M1033.6,230.8 L1036.1,227.6 L1038.6,230.8 Z M1033.6,233 L1036.1,236.2 L1038.6,233 Z" fill="#1d3352"/></svg>
<div class="t" style="left:46.0px;top:743.90px;font-size:13px;color:#fff;-webkit-text-stroke:0.35px #fff">E</div>
</body></html>
